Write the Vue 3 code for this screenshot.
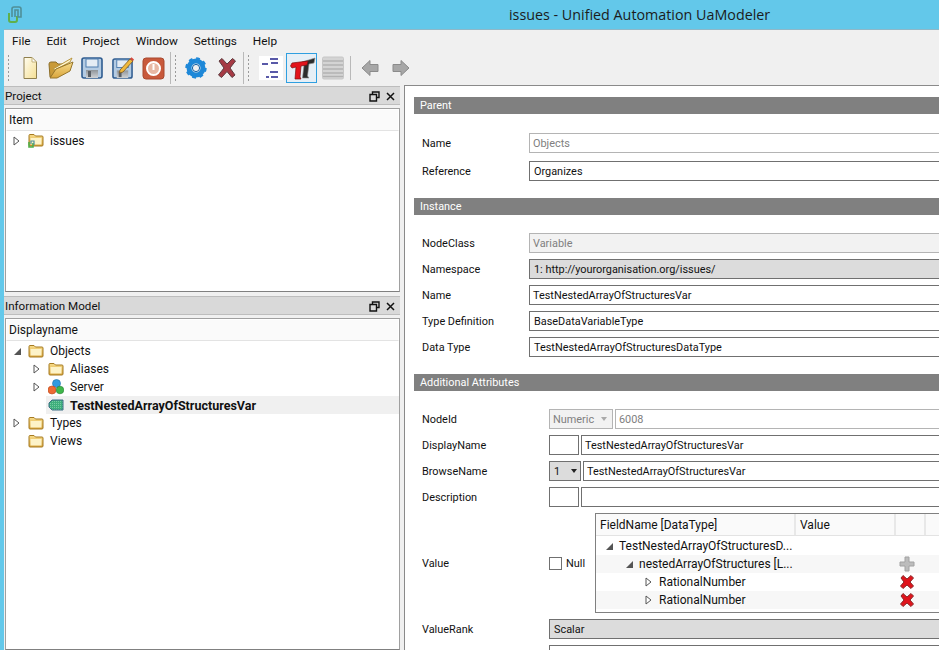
<template>
  <div class="window">
    <svg class="defs" width="0" height="0">
      <defs>
        <linearGradient id="gold" x1="0" y1="0" x2="0" y2="1">
          <stop offset="0" stop-color="#f7dc8a" />
          <stop offset="1" stop-color="#d9a53c" />
        </linearGradient>
        <linearGradient id="paper" x1="0" y1="0" x2="1" y2="1">
          <stop offset="0" stop-color="#fffdf0" />
          <stop offset="1" stop-color="#f5df93" />
        </linearGradient>
        <linearGradient id="shutter" x1="0" y1="0" x2="0" y2="1">
          <stop offset="0" stop-color="#8f9499" />
          <stop offset="1" stop-color="#d0d3d6" />
        </linearGradient>
        <pattern id="dots" width="2" height="2" patternUnits="userSpaceOnUse">
          <rect width="2" height="2" fill="#3fae7c" />
          <rect width="1" height="1" fill="#74cba2" />
        </pattern>
        <symbol id="folder" viewBox="0 0 16 14">
          <path d="M1 2.5Q1 1.5 2 1.5H6L7.5 3H14Q15 3 15 4V12Q15 13 14 13H2Q1 13 1 12Z" fill="url(#gold)" stroke="#a57a22" />
          <rect x="2.5" y="5" width="11" height="6.5" fill="#fdf3c8" />
        </symbol>
        <symbol id="cross" viewBox="0 0 18 18">
          <path d="M3 5L5 2.5 9 6 13 2.5 15.5 5 12 9 15.5 13 13 15.5 9 12 5 15.5 2.5 13 6 9Z" fill="#e0141c" stroke="#8a2a2a" />
        </symbol>
        <symbol id="floppy" viewBox="0 0 22 22">
          <rect x="1" y="1" width="20" height="20" rx="2" fill="#b4cbe2" stroke="#2f5c90" stroke-width="1.6" />
          <rect x="5" y="2" width="12" height="8" fill="#e4ecf4" stroke="#4f7eb0" />
          <rect x="5" y="13" width="12" height="8" fill="url(#shutter)" />
          <rect x="7" y="14" width="3" height="6" fill="#5a5f65" />
        </symbol>
      </defs>
    </svg>

    <!-- Title bar -->
    <header class="titlebar">
      <svg class="logo" width="16" height="20" viewBox="0 0 16 20">
        <path d="M2 9V16Q2 18 4 18H8Q10 18 10 16V12" fill="none" stroke="#5fb04a" stroke-width="2" />
        <path d="M5 13V5Q5 3 7 3H12Q14 3 14 5V13H11V6H8V13" fill="none" stroke="#4f8f98" stroke-width="1.6" />
      </svg>
      <span class="title">issues - Unified Automation UaModeler</span>
    </header>

    <div class="frame">
      <!-- Menu -->
      <nav class="menubar">
        <span v-for="m in menus" :key="m" class="menu-item">{{ m }}</span>
      </nav>

      <!-- Toolbar -->
      <div class="toolbar">
        <i class="grip first"></i>
        <span class="tool">
          <svg width="16" height="24" viewBox="0 0 16 24">
            <path d="M2 1.5H10L14.5 6V22.5H2Z" fill="url(#paper)" stroke="#8f7f4e" />
            <path d="M10 1.5V6H14.5Z" fill="#fff" stroke="#c3b27c" />
          </svg>
        </span>
        <span class="tool">
          <svg width="26" height="24" viewBox="0 0 26 24">
            <path d="M2 21L1 8Q1 6 3 6H8L10 8H18V12Z" fill="#c99a38" stroke="#8c6e2a" />
            <path d="M5 13L24 2 22 6 7 14Z" fill="#fff6cf" stroke="#b8963f" />
            <path d="M2 22L8 13 25 6 22 15 9 22Z" fill="url(#gold)" stroke="#96752a" />
          </svg>
        </span>
        <span class="tool">
          <svg width="22" height="22"><use href="#floppy" /></svg>
        </span>
        <span class="tool">
          <svg width="22" height="24" viewBox="0 0 22 24">
            <use href="#floppy" y="2" width="21" height="21" />
            <path d="M8 14L18 3 21 5 11 16 7.5 17Z" fill="#f0b93c" stroke="#7e5a22" stroke-width=".8" />
            <path d="M18 3L19.5 1.2 22 3.4 21 5Z" fill="#d9483b" />
          </svg>
        </span>
        <span class="tool">
          <svg width="23" height="23" viewBox="0 0 23 23">
            <rect x="1" y="1" width="21" height="21" rx="3" fill="#c8593b" stroke="#a8492f" />
            <circle cx="11.5" cy="11.5" r="6.5" fill="#e8b8a4" stroke="#fff" stroke-width="2" />
            <path d="M11.5 7V13" stroke="#fff" stroke-width="2" />
          </svg>
        </span>
        <i class="sep"></i>
        <i class="grip"></i>
        <span class="tool">
          <svg width="22" height="22" viewBox="0 0 22 22">
            <circle cx="11" cy="11" r="7" fill="none" stroke="#1e88d8" stroke-width="5" />
            <circle cx="11" cy="11" r="9.2" fill="none" stroke="#1e88d8" stroke-width="3" stroke-dasharray="3.6 3.6" />
            <circle cx="11" cy="11" r="3.6" fill="#f0f0f0" stroke="#0f5fa5" />
          </svg>
        </span>
        <span class="tool">
          <svg width="20" height="22" viewBox="0 0 20 22">
            <path d="M2 4L5 1.5 10 7 15.5 1.5 18.5 4 13 11 18 18 15 20.5 10 14.5 4.5 20.5 1.5 18 7 11Z" fill="#a63a44" stroke="#5e3a3e" />
          </svg>
        </span>
        <i class="sep"></i>
        <i class="grip wide"></i>
        <span class="tool">
          <svg class="hier" width="24" height="24" viewBox="0 0 24 24">
            <rect width="24" height="24" fill="#fff" />
            <path d="M11 3H19M3 8H9M12 7H19M11 16H19M7 21H10M12 21H19" stroke="#23238c" stroke-width="1.6" />
          </svg>
        </span>
        <span class="tool active">
          <svg width="28" height="26" viewBox="0 0 28 26">
            <path d="M14 7L27 3 26 8 21 9 19.5 21 21 23H14.5L16 10 14 10Z" fill="#2c2c2c" stroke="#8a8a8a" stroke-width=".6" />
            <path d="M2.5 11L4 8 20 6 19 10 13 11 12 22 13 24H7L8 12 4 13Z" fill="#e3141c" stroke="#7a1010" stroke-width=".7" />
          </svg>
        </span>
        <span class="tool">
          <svg width="22" height="24" viewBox="0 0 22 24">
            <rect x=".5" y="1" width="21" height="22" rx="1.5" fill="#d4d4d4" stroke="#c6c6c6" />
            <path d="M1 5H21M1 9H21M1 13H21M1 17H21M1 20.5H21" stroke="#b2b2b2" stroke-width="1.5" />
          </svg>
        </span>
        <i class="sep short"></i>
        <span class="tool">
          <svg width="18" height="18" viewBox="0 0 18 18">
            <path d="M1 9L9 1.5V5.5H17V12.5H9V16.5Z" fill="#a7a7a7" stroke="#8b8b8b" />
          </svg>
        </span>
        <span class="tool">
          <svg width="18" height="18" viewBox="0 0 18 18">
            <path d="M17 9L9 1.5V5.5H1V12.5H9V16.5Z" fill="#a7a7a7" stroke="#8b8b8b" />
          </svg>
        </span>
      </div>

      <div class="workspace">
        <!-- Left docks -->
        <aside class="docks">
          <section v-for="dock in docks" :key="dock.title" class="dock" :class="dock.cls">
            <div class="dock-title">
              <span>{{ dock.title }}</span>
              <svg class="dock-btn" width="11" height="11" viewBox="0 0 11 11">
                <path d="M3.5 3V1H10V6.5H8M1 3.5H7.5V10H1Z" fill="none" stroke="#111" stroke-width="1.4" />
              </svg>
              <svg class="dock-btn close" width="9" height="9" viewBox="0 0 9 9">
                <path d="M1 1L8 8M8 1L1 8" stroke="#111" stroke-width="1.5" />
              </svg>
            </div>
            <div class="tree-panel">
              <div class="tree-head">{{ dock.head }}</div>
              <div
                v-for="row in dock.rows"
                :key="row.text"
                class="tree-row"
                :style="{ paddingLeft: 7 + row.depth * 20 + 'px' }"
              >
                <span class="branch">
                  <svg v-if="row.state === 'closed'" width="7" height="10" viewBox="0 0 7 10">
                    <path d="M1 1L6 5 1 9Z" fill="#fff" stroke="#555" />
                  </svg>
                  <svg v-else-if="row.state === 'open'" width="9" height="9" viewBox="0 0 9 9">
                    <path d="M8 1V8H1Z" fill="#555" />
                  </svg>
                </span>
                <span class="row-body" :class="{ current: row.current }">
                  <svg v-if="row.icon === 'folder'" class="row-icon" width="16" height="14">
                    <use href="#folder" />
                  </svg>
                  <svg v-else-if="row.icon === 'project'" class="row-icon" width="16" height="16" viewBox="0 0 16 16">
                    <use href="#folder" width="16" height="14" />
                    <path d="M1 9V14H5V10" fill="none" stroke="#4fae48" stroke-width="1.6" />
                    <path d="M3 11V8H6V12" fill="none" stroke="#4f8f98" stroke-width="1.2" />
                  </svg>
                  <svg v-else-if="row.icon === 'server'" class="row-icon" width="16" height="16" viewBox="0 0 16 16">
                    <circle cx="8.5" cy="4.5" r="4" fill="#2f9be0" stroke="#1d6fa8" stroke-width=".6" />
                    <circle cx="4" cy="11" r="4" fill="#ee6a33" stroke="#b84a1e" stroke-width=".6" />
                    <circle cx="12" cy="11" r="3.8" fill="#3fb84a" stroke="#267c30" stroke-width=".6" />
                  </svg>
                  <svg v-else-if="row.icon === 'tag'" class="row-icon" width="16" height="12" viewBox="0 0 16 12">
                    <path d="M4 1H15V11H4L1 8V4Z" fill="url(#dots)" stroke="#3d6f86" />
                  </svg>
                  <span class="row-text">{{ row.text }}</span>
                </span>
              </div>
            </div>
          </section>
        </aside>

        <!-- Properties -->
        <main class="props">
          <div class="bar parent">Parent</div>
          <div class="row first top">
            <label>Name</label>
            <div class="field off">Objects</div>
          </div>
          <div class="row wide-gap">
            <label>Reference</label>
            <div class="field combo">Organizes</div>
          </div>

          <div class="bar">Instance</div>
          <div class="row first">
            <label>NodeClass</label>
            <div class="field off shaded">Variable</div>
          </div>
          <div class="row">
            <label>Namespace</label>
            <div class="field ro">1: http://yourorganisation.org/issues/</div>
          </div>
          <div class="row">
            <label>Name</label>
            <div class="field">TestNestedArrayOfStructuresVar</div>
          </div>
          <div class="row">
            <label>Type Definition</label>
            <div class="field combo">BaseDataVariableType</div>
          </div>
          <div class="row">
            <label>Data Type</label>
            <div class="field combo">TestNestedArrayOfStructuresDataType</div>
          </div>

          <div class="bar">Additional Attributes</div>
          <div class="row first attr">
            <label>NodeId</label>
            <div class="field off shaded small-combo">
              Numeric
              <svg width="6" height="4" viewBox="0 0 6 4"><path d="M0 0H6L3 4Z" fill="#aaa" /></svg>
            </div>
            <div class="field off id-field">6008</div>
          </div>
          <div class="row attr">
            <label>DisplayName</label>
            <div class="field locale"></div>
            <div class="field">TestNestedArrayOfStructuresVar</div>
          </div>
          <div class="row attr">
            <label>BrowseName</label>
            <div class="field ro ns-combo">
              1
              <svg width="6" height="4" viewBox="0 0 6 4"><path d="M0 0H6L3 4Z" fill="#222" /></svg>
            </div>
            <div class="field">TestNestedArrayOfStructuresVar</div>
          </div>
          <div class="row attr">
            <label>Description</label>
            <div class="field locale"></div>
            <div class="field"></div>
          </div>

          <div class="row attr value-row">
            <label>Value</label>
            <span class="null-box"></span>
            <span class="null-text">Null</span>
            <div class="value-table">
              <div class="vt-head">
                <span class="col-name">FieldName [DataType]</span>
                <span class="col-value">Value</span>
                <span class="col-act"></span>
                <span class="col-rest"></span>
              </div>
              <div
                v-for="(f, i) in fields"
                :key="i"
                class="vt-row"
                :class="{ alt: i % 2 === 1 }"
              >
                <span class="vt-name" :style="{ paddingLeft: 9 + f.depth * 20 + 'px' }">
                  <span class="vt-branch">
                    <svg v-if="f.open" width="9" height="9" viewBox="0 0 9 9">
                      <path d="M8 1V8H1Z" fill="#555" />
                    </svg>
                    <svg v-else width="7" height="10" viewBox="0 0 7 10">
                      <path d="M1 1L6 5 1 9Z" fill="#fff" stroke="#555" />
                    </svg>
                  </span>
                  {{ f.text }}
                </span>
                <span class="vt-action">
                  <svg v-if="f.action === 'add'" width="18" height="18" viewBox="0 0 18 18">
                    <path d="M7 2H11V7H16V11H11V16H7V11H2V7H7Z" fill="#bcbcbc" stroke="#a2a2a2" />
                  </svg>
                  <svg v-else-if="f.action === 'remove'" width="18" height="18">
                    <use href="#cross" />
                  </svg>
                </span>
              </div>
            </div>
          </div>

          <div class="row attr">
            <label>ValueRank</label>
            <div class="field ro">Scalar</div>
          </div>
          <div class="row attr">
            <label></label>
            <div class="field"></div>
          </div>
        </main>
      </div>
    </div>
  </div>
</template>

<script setup>
const menus = ['File', 'Edit', 'Project', 'Window', 'Settings', 'Help']

const docks = [
  {
    title: 'Project',
    head: 'Item',
    cls: 'project',
    rows: [{ text: 'issues', depth: 0, state: 'closed', icon: 'project' }]
  },
  {
    title: 'Information Model',
    head: 'Displayname',
    cls: 'model',
    rows: [
      { text: 'Objects', depth: 0, state: 'open', icon: 'folder' },
      { text: 'Aliases', depth: 1, state: 'closed', icon: 'folder' },
      { text: 'Server', depth: 1, state: 'closed', icon: 'server' },
      { text: 'TestNestedArrayOfStructuresVar', depth: 1, icon: 'tag', current: true },
      { text: 'Types', depth: 0, state: 'closed', icon: 'folder' },
      { text: 'Views', depth: 0, icon: 'folder' }
    ]
  }
]

const fields = [
  { text: 'TestNestedArrayOfStructuresD...', depth: 0, open: true },
  { text: 'nestedArrayOfStructures [L...', depth: 1, open: true, action: 'add' },
  { text: 'RationalNumber', depth: 2, action: 'remove' },
  { text: 'RationalNumber', depth: 2, action: 'remove' }
]
</script>

<style scoped>
.window {
  width: 939px;
  height: 650px;
  overflow: hidden;
  background: #63c8ea;
  font: 12px Roboto, "Open Sans", sans-serif;
  color: #111;
  display: flex;
  flex-direction: column;
}

.defs {
  position: absolute;
}

.titlebar {
  height: 29px;
  flex: none;
  display: flex;
  align-items: center;
}

.logo {
  margin: -1px 0 0 7px;
}

.title {
  margin-left: 486px;
  font: 14.3px "Open Sans", sans-serif;
  color: #1c1c1c;
}

.frame {
  flex: 1;
  min-height: 0;
  margin-left: 4px;
  background: #f0f0f0;
  display: flex;
  flex-direction: column;
  border-top: 1px solid #8fb8c8;
}

.menubar {
  height: 21px;
  flex: none;
  display: flex;
  align-items: center;
  padding-left: 8px;
  gap: 16px;
  font-size: 11.8px;
}

.toolbar {
  height: 34px;
  flex: none;
  display: flex;
  align-items: center;
}

.tool {
  width: 31px;
  height: 30px;
  flex: none;
  display: flex;
  align-items: center;
  justify-content: center;
  box-sizing: border-box;
}

.tool.active {
  border: 1px solid #2f9fe0;
  background: #e6eff6;
}

.grip {
  width: 3px;
  height: 28px;
  flex: none;
  margin: 0 3px;
  background: radial-gradient(circle, #9a9a9a 0.8px, transparent 1px) 0 0 / 3px 4px;
}

.grip.first {
  margin: 0 4px 0 3px;
}

.grip.wide {
  margin-right: 5px;
}

.sep {
  width: 1px;
  height: 32px;
  flex: none;
  margin: 0 0 0 1px;
  background: #b9b9b9;
}

.sep.short {
  height: 24px;
  margin: 0 3px 0 2px;
}

.workspace {
  flex: 1;
  min-height: 0;
  display: flex;
}

.docks {
  width: 396px;
  flex: none;
  display: flex;
  flex-direction: column;
  margin-top: 1px;
}

.dock {
  display: flex;
  flex-direction: column;
  min-height: 0;
}

.dock.project {
  height: 206px;
  flex: none;
  margin-bottom: 4px;
}

.dock.model {
  flex: 1;
}

.dock-title {
  height: 19px;
  flex: none;
  display: flex;
  align-items: center;
  padding: 1px 0 0 1px;
  background: #d9d9d9;
  border-top: 1px solid #bdbdbd;
  border-bottom: 1px solid #bdbdbd;
  box-sizing: border-box;
  font-size: 11.6px;
}

.dock-title span {
  flex: 1;
}

.dock-btn {
  margin-right: 6px;
}

.dock-btn.close {
  margin-right: 5px;
}

.tree-panel {
  flex: 1;
  min-height: 0;
  margin: 3px 0 0 1px;
  background: #fff;
  border: 1px solid #a0a0a0;
  border-bottom-color: #808080;
  box-sizing: border-box;
}

.tree-head {
  height: 22px;
  padding-left: 2px;
  display: flex;
  align-items: center;
  background: #fafafa;
  border: 1px solid #fff;
  border-bottom: 1px solid #e3e3e3;
  box-sizing: border-box;
  margin-bottom: 1px;
}

.tree-row {
  height: 18px;
  display: flex;
  align-items: center;
}

.branch {
  width: 9px;
  flex: none;
  margin-right: 4px;
  display: flex;
  align-items: center;
}

.row-body {
  flex: 1;
  height: 18px;
  display: flex;
  align-items: center;
  padding-left: 2px;
}

.row-body.current {
  background: #f0f0f0;
  font-weight: 700;
  font-size: 12.5px;
}

.row-icon {
  flex: none;
  margin-right: 6px;
}

.props {
  flex: none;
  width: 600px;
  margin-left: 4px;
  padding: 11px 0 0 9px;
  background: #fff;
  border-left: 1px solid #8a8a8a;
  border-top: 1px solid #8a8a8a;
  box-sizing: border-box;
  font-size: 10.9px;
}

.bar {
  height: 17px;
  margin-top: 17px;
  padding-left: 6px;
  display: flex;
  align-items: center;
  background: #808080;
  color: #fff;
}

.bar.parent {
  margin-top: 0;
}

.row {
  height: 20px;
  margin-top: 6px;
  display: flex;
  align-items: center;
}

.row.first {
  margin-top: 18px;
}

.row.first.top {
  margin-top: 19px;
}

.row.wide-gap {
  margin-top: 8px;
}

.row label {
  width: 115px;
  padding-left: 8px;
  box-sizing: border-box;
  flex: none;
}

.row.attr label {
  width: 135px;
}

.field {
  flex: 1;
  height: 20px;
  padding-left: 3px;
  display: flex;
  align-items: center;
  background: #fff;
  border: 1px solid #707070;
  box-sizing: border-box;
  white-space: nowrap;
}

.field.combo {
  padding-left: 4px;
}

.field.off {
  color: #808080;
  border-color: #b4b4b4;
}

.field.shaded {
  background: #f2f2f2;
}

.field.ro {
  padding-left: 4px;
  background: #dcdcdc;
}

.small-combo {
  flex: none;
  width: 64px;
  justify-content: space-between;
  padding-right: 5px;
}

.id-field {
  margin-left: 2px;
}

.locale {
  flex: none;
  width: 30px;
  margin-right: 2px;
}

.ns-combo {
  flex: none;
  width: 32px;
  margin-right: 2px;
  justify-content: space-between;
  padding-right: 3px;
}

.value-row {
  height: 100px;
}

.null-box {
  width: 13px;
  height: 13px;
  flex: none;
  box-sizing: border-box;
  border: 1px solid #707070;
  background: #fff;
}

.null-text {
  width: 29px;
  margin-left: 4px;
  flex: none;
}

.value-table {
  flex: 1;
  height: 100px;
  border: 1px solid #808080;
  box-sizing: border-box;
  background: #fff;
  font-size: 12px;
}

.vt-head {
  height: 22px;
  display: flex;
  background: #fafafa;
  border-bottom: 1px solid #e3e3e3;
  box-sizing: border-box;
  margin-bottom: 1px;
}

.vt-head span {
  display: flex;
  align-items: center;
  padding: 1px 0 0 4px;
  box-sizing: border-box;
  border-right: 2px solid #e8e8e8;
}

.col-name {
  width: 200px;
}

.col-value {
  width: 100px;
}

.col-act {
  width: 30px;
}

.col-rest {
  flex: 1;
}

.vt-row {
  height: 18px;
  display: flex;
  align-items: center;
}

.vt-row.alt {
  background: #f7f7f7;
}

.vt-name {
  width: 300px;
  flex: none;
  box-sizing: border-box;
  display: flex;
  align-items: center;
  white-space: nowrap;
}

.vt-branch {
  width: 14px;
  flex: none;
  display: flex;
  align-items: center;
}

.vt-action {
  width: 22px;
  flex: none;
  display: flex;
  justify-content: center;
  align-items: center;
}
</style>

<style>
body {
  background: #63c8ea;
}
</style>
